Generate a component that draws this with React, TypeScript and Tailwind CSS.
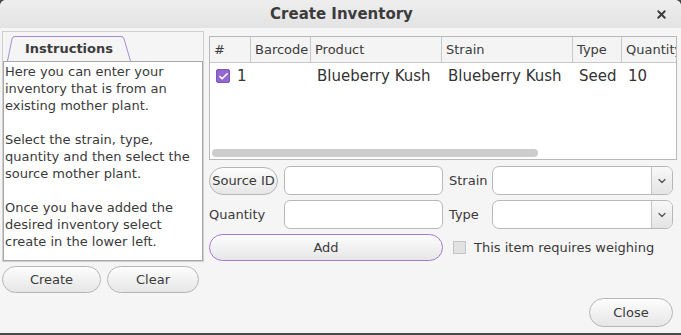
import { Check, ChevronDown, X } from "lucide-react";

const btn =
  "flex items-center justify-center rounded-full border border-[#b5b5b5] bg-gradient-to-b from-[#fdfdfd] to-[#e6e6e6] text-[13px] text-[#3a3a3a]";

function Combo() {
  return (
    <div className="flex h-[29px] w-[181px] shrink-0 overflow-hidden rounded-[7px] border border-[#b8b8b8] bg-white">
      <div className="flex-1" />
      <div className="flex w-[21px] items-center justify-center border-l border-[#c4c4c4] bg-gradient-to-b from-[#f8f8f8] to-[#e4e4e4]">
        <ChevronDown size={12} strokeWidth={2.5} className="text-[#555]" />
      </div>
    </div>
  );
}

function Field() {
  return <div className="h-[29px] w-[159px] shrink-0 rounded-[6px] border border-[#b8b8b8] bg-white" />;
}

const columns = [
  { name: "#", w: 41 },
  { name: "Barcode", w: 60 },
  { name: "Product", w: 131 },
  { name: "Strain", w: 131 },
  { name: "Type", w: 49 },
  { name: "Quantity", w: 60 },
];

export default function App() {
  return (
    <div className="h-[335px] w-[681px] bg-[#4a4a4a] font-['DejaVu_Sans',sans-serif] text-[#3a3a3a]">
      <div className="flex h-[333px] flex-col overflow-hidden rounded-t-[6px] bg-[#f5f5f5]">
        {/* title bar */}
        <div className="flex h-[28px] shrink-0 items-center bg-gradient-to-b from-[#eeeeee] to-[#e3e3e3]">
          <div className="flex-1 pl-[28px] text-center text-[15px] font-bold text-[#3c3c3c]">
            Create Inventory
          </div>
          <X size={13} strokeWidth={3.5} className="mr-[13px] text-[#3c3c3c]" />
        </div>

        <div className="flex flex-1 pt-[3px]">
          {/* left column */}
          <div className="ml-[2px] flex w-[202px] shrink-0 flex-col">
            <div className="flex h-[231px] flex-col border border-[#cfcfcf]">
              <div className="flex h-[29px] items-end pl-[4px]">
                <div className="relative flex h-[25px] w-[124px] items-center justify-center text-[13px] font-bold text-[#3c3c3c]">
                  <svg className="absolute inset-0" width="124" height="25" viewBox="0 0 124 25">
                    <path d="M0.5 25 L5 3 Q5.5 0.5 8 0.5 L114 0.5 Q116.5 0.5 117 3 L123.5 25" fill="#f5f5f5" stroke="#a58bd6" strokeWidth="1" />
                  </svg>
                  <span className="relative">Instructions</span>
                </div>
              </div>
              <div className="flex-1 border border-[#a8a8a8] bg-white px-[1px] pt-[1px] text-[13px] leading-[17px] text-[#3a3a3a]">
                <p>Here you can enter your inventory that is from an existing mother plant.</p>
                <p className="mt-[17px]">Select the strain, type, quantity and then select the source mother plant.</p>
                <p className="mt-[17px]">Once you have added the desired inventory select create in the lower left.</p>
              </div>
            </div>
            <div className="mt-[4px] flex gap-[6px]">
              <button className={`${btn} h-[27px] w-[99px]`}>Create</button>
              <button className={`${btn} h-[27px] w-[92px]`}>Clear</button>
            </div>
          </div>

          {/* right column */}
          <div className="ml-[5px] mr-[4px] flex min-w-0 flex-1 flex-col pb-[6px]">
            <div className="mt-[5px] flex h-[124px] flex-col overflow-hidden border border-[#b9b9b9] bg-white">
              <div className="flex h-[26px] shrink-0 border-b border-[#c8c8c8] bg-[#f4f4f4] text-[13px]">
                {columns.map((c, i) => (
                  <div
                    key={c.name}
                    style={{ width: c.w }}
                    className={`flex shrink-0 items-center overflow-hidden whitespace-nowrap pl-[4px] ${i < columns.length - 1 ? "border-r border-[#c8c8c8]" : ""}`}
                  >
                    {c.name}
                  </div>
                ))}
              </div>
              <div className="flex h-[26px] items-center whitespace-nowrap text-[15px] text-[#333]">
                <div className="flex w-[41px] shrink-0 items-center pl-[6px]">
                  <span className="flex h-[14px] w-[14px] items-center justify-center rounded-[2px] border border-[#7d56b8] bg-[#9369cf]">
                    <Check size={11} strokeWidth={3.5} className="text-white" />
                  </span>
                  <span className="ml-[7px]">1</span>
                </div>
                <div className="w-[60px] shrink-0" />
                <div className="w-[131px] shrink-0 pl-[6px]">Blueberry Kush</div>
                <div className="w-[131px] shrink-0 pl-[6px]">Blueberry Kush</div>
                <div className="w-[49px] shrink-0 pl-[6px]">Seed</div>
                <div className="pl-[6px]">10</div>
              </div>
              <div className="mt-auto mb-[2px] px-[2px]">
                <div className="h-[8px] w-[326px] rounded-full bg-[#cdcdcd]" />
              </div>
            </div>

            <div className="mt-[6px] flex items-center">
              <button className={`${btn} h-[28px] w-[69px] shrink-0 px-0`}>Source ID</button>
              <div className="ml-[6px]"><Field /></div>
              <span className="ml-[6px] w-[43px] shrink-0 text-[13px]">Strain</span>
              <Combo />
            </div>
            <div className="mt-[5px] flex items-center">
              <span className="w-[75px] shrink-0 text-[13px]">Quantity</span>
              <Field />
              <span className="ml-[6px] w-[43px] shrink-0 text-[13px]">Type</span>
              <Combo />
            </div>
            <div className="mt-[5px] flex items-center">
              <button className="flex h-[27px] w-[234px] shrink-0 items-center justify-center rounded-full border border-[#a078db] bg-gradient-to-b from-[#fdfdfd] to-[#e6e6e6] text-[13px] text-[#3a3a3a]">
                Add
              </button>
              <span className="ml-[10px] h-[13px] w-[13px] border border-[#c4c4c4] bg-[#e2e2e2]" />
              <span className="ml-[8px] text-[13px]">This item requires weighing</span>
            </div>

            <button className={`${btn} mt-auto mr-[4px] h-[29px] w-[84px] self-end`}>Close</button>
          </div>
        </div>
      </div>
    </div>
  );
}
